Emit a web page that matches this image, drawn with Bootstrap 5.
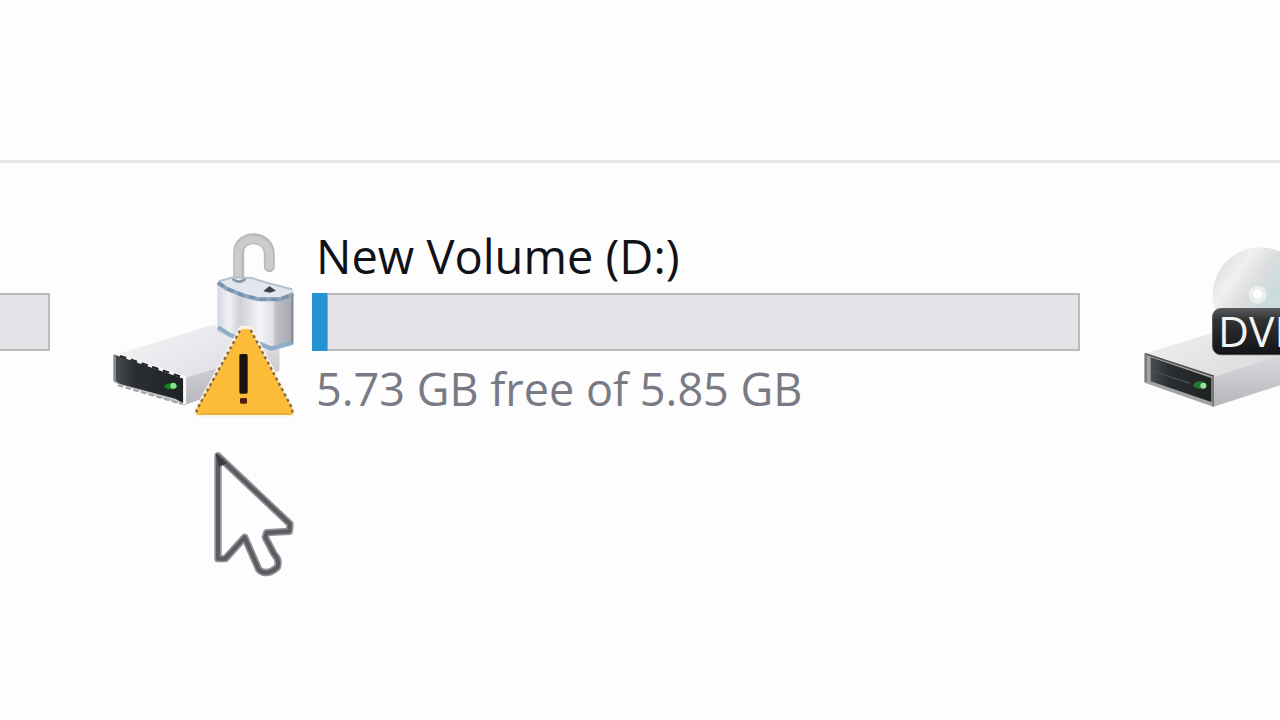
<!DOCTYPE html>
<html lang="en">
<head>
<meta charset="utf-8">
<meta name="viewport" content="width=device-width, initial-scale=1">
<title>Devices and drives</title>
<link href="https://cdn.jsdelivr.net/npm/bootstrap@5.3.0/dist/css/bootstrap.min.css" rel="stylesheet">
<style>
body { background: #fdfdfd; font-family: "Open Sans", "Noto Sans", sans-serif; }
.explorer { min-height: 100vh; }
.group-head { height: 163px; border-bottom: 3px solid #e6e6e6; }
.drives { padding-top: 67px; }
.drive-icon { width: 182px; height: 190px; }
.dvd-icon { width: 138px; height: 190px; }
.drive-info { margin: 0 62px 0 18px; min-width: 0; }
.drive-name, .drive-space { white-space: nowrap; padding-left: 4px; }
.drive-name { font-size: 47px; line-height: 52px; color: #111118; margin-bottom: 11px; }
.drive-space { font-size: 45px; line-height: 56px; color: #797a84; margin-top: 10px; }
.capacity { height: 58px; border: 2px solid #bbb; border-radius: 0; background: #e4e3e7; }
.capacity .progress-bar { background: #2593d1; margin: -2px 0 -2px -2px; border-right: 1px solid #9aa4b0; }
.prev-drive { width: 50px; margin-right: 62px; padding-top: 63px; }
.prev-drive .capacity { border-left: 0; }
.pointer { left: 200px; top: 440px; width: 110px; height: 150px; }
</style>
</head>
<body>
<main class="explorer position-relative overflow-hidden">
  <header class="group-head"></header>
  <section class="drives d-flex align-items-start">
    <div class="prev-drive flex-shrink-0">
      <div class="progress capacity" role="progressbar" aria-label="Previous drive capacity"></div>
    </div>

    <svg class="drive-icon flex-shrink-0" viewBox="36 30 546 570" aria-hidden="true">
      <defs>
        <linearGradient id="top" x1="0" y1="0" x2="1" y2="1"><stop offset="0" stop-color="#f6f6f8"/><stop offset=".6" stop-color="#e2e1e6"/><stop offset="1" stop-color="#cfced4"/></linearGradient>
        <linearGradient id="side" x1="0" y1="0" x2="0" y2="1"><stop offset="0" stop-color="#d9d9de"/><stop offset="1" stop-color="#b6b6bc"/></linearGradient>
        <linearGradient id="face" x1="0" y1="0" x2="1" y2="0"><stop offset="0" stop-color="#4b4e50"/><stop offset=".3" stop-color="#2b2e31"/><stop offset="1" stop-color="#1d2222"/></linearGradient>
        <linearGradient id="lockL" x1="0" y1="0" x2="1" y2="0"><stop offset="0" stop-color="#d4d8e0"/><stop offset=".5" stop-color="#f0f1f5"/><stop offset="1" stop-color="#c8cbd4"/></linearGradient>
        <linearGradient id="lockR" x1="0" y1="0" x2="1" y2="0"><stop offset="0" stop-color="#d2d4da"/><stop offset=".35" stop-color="#f5f5f8"/><stop offset=".6" stop-color="#e0e0e5"/><stop offset=".66" stop-color="#c0c1c8"/><stop offset="1" stop-color="#a3a5ad"/></linearGradient>
      </defs>
      <path d="M44 404 L340 314 L538 370 V450 L250 556 L248 488 Z" fill="url(#top)"/>
      <path d="M248 476 L538 388 V452 L252 556 Z" fill="url(#side)"/>
      <path d="M42 404 L60 400 L250 470 L252 556 L42 488 Z" fill="#c6c6ca"/>
      <path d="M44 404 L250 476 V550 L226 536 L60 492 L44 482 Z" fill="url(#face)"/>
      <path d="M44 404 V484" stroke="#8a8a8c" stroke-width="8"/>
      <path d="M48 400 L254 472 V552" fill="none" stroke="#f8f8fa" stroke-width="9"/>
      <path d="M54 496 L246 552" fill="none" stroke="#a2a3a7" stroke-width="6" stroke-dasharray="16 8"/>
      <path d="M60 408 L242 470" fill="none" stroke="#25292b" stroke-width="7" stroke-dasharray="20 14"/>
      <ellipse cx="213" cy="499" rx="20" ry="9" fill="#168421"/><circle cx="220" cy="497" r="9" fill="#8ee28e"/>

      <path d="M416 184 V98 C416 42 508 40 508 104 V140" fill="none" stroke="#bab9bc" stroke-width="33" stroke-linecap="round"/>
      <path d="M414 180 V98 C416 46 504 42 508 104 V138" fill="none" stroke="#cbcacd" stroke-width="22" stroke-linecap="round"/>
      <path d="M352 190 L425 224 V372 L352 336 Z" fill="url(#lockL)"/>
      <path d="M425 224 L480 236 L580 222 V372 L525 388 L425 360 Z" fill="url(#lockR)"/>
      <path d="M354 184 L400 170 L450 172 L580 208 V226 L500 238 L430 226 L356 196 Z" fill="#e3e7ed"/>
      <path d="M398 176 C410 190 432 186 436 174" fill="none" stroke="#8297ac" stroke-width="8"/>
      <path d="M354 188 L380 206 L430 226 L476 238 L540 238 L580 222" fill="none" stroke="#8ea5bc" stroke-width="12"/>
      <path d="M354 188 L380 206 L430 226 L476 238 L540 238 L580 222" fill="none" stroke="#7892ad" stroke-width="10" stroke-dasharray="20 14"/>
      <path d="M356 184 L400 172 L454 174 L500 188 L576 208" fill="none" stroke="#b3c2d0" stroke-width="6"/>
      <path d="M490 214 L508 198 L528 212 L510 218 Z" fill="#3c424b"/>
      <path d="M354 322 L390 345 L430 358 L482 372 L514 386 L578 368" fill="none" stroke="#91aec9" stroke-width="13"/>
      <path d="M577 226 V370" stroke="#858a93" stroke-width="6"/>

      <path d="M420 318 H454 L582 562 V590 H284 V566 Z" fill="#fcf2e2"/>
      <path d="M424 328 H450 L578 568 V585 H290 V568 Z" fill="#fdbc38"/>
      <path d="M420 332 L290 570 V583 M452 330 L577 566 V586" fill="none" stroke="#80684a" stroke-width="7" stroke-dasharray="9 9"/>
      <path d="M304 582 H570" stroke="#e7a747" stroke-width="5"/>
      <rect x="418" y="402" width="25" height="119" rx="5" fill="#1e120e"/>
      <rect x="420" y="534" width="21" height="17" rx="4" fill="#50200c"/>
    </svg>

    <div class="drive-info flex-grow-1">
      <div class="drive-name">New Volume (D:)</div>
      <div class="progress capacity overflow-visible" role="progressbar" aria-label="Used space on New Volume" aria-valuenow="2" aria-valuemin="0" aria-valuemax="100">
        <div class="progress-bar" style="width: 2.1%"></div>
      </div>
      <div class="drive-space">5.73 GB free of 5.85 GB</div>
    </div>

    <svg class="dvd-icon flex-shrink-0" viewBox="36 0 414 570" role="img" aria-label="DVD drive">
      <defs>
        <linearGradient id="disc" x1="0" y1="0" x2="1" y2=".7"><stop offset="0" stop-color="#d5d5d8"/><stop offset=".3" stop-color="#f0eff2"/><stop offset=".48" stop-color="#dcdddf"/><stop offset=".68" stop-color="#c8dcda"/><stop offset="1" stop-color="#dcdce0"/></linearGradient>
        <linearGradient id="badgeFill" x1="0" y1="0" x2="0" y2="1"><stop offset="0" stop-color="#58595b"/><stop offset=".25" stop-color="#303133"/><stop offset="1" stop-color="#121315"/></linearGradient>
        <linearGradient id="dvdTop" x1="0" y1="0" x2="1" y2="1"><stop offset="0" stop-color="#f0f0f2"/><stop offset="1" stop-color="#d2d2d5"/></linearGradient>
      </defs>
      <path d="M46 370 L250 308 L470 370 L470 460 L250 530 Z" fill="url(#dvdTop)"/>
      <path d="M250 442 L470 370 V458 L250 530 Z" fill="url(#side)"/>
      <path d="M44 370 L252 440 V531 L44 458 Z" fill="#a3a3a5"/>
      <path d="M62 382 L244 444 V516 L62 454 Z" fill="url(#face)"/>
      <path d="M46 371 L252 439" stroke="#4d4d4f" stroke-width="5"/>
      <path d="M47 370 V456" stroke="#77787a" stroke-width="7"/>
      <path d="M249 442 V528" stroke="#77787a" stroke-width="6"/>
      <path d="M70 424 L180 460" stroke="#4b4c50" stroke-width="4"/>
      <ellipse cx="210" cy="465" rx="20" ry="11" fill="#25782e"/><circle cx="220" cy="467" r="9" fill="#9ce19c"/>
      <circle cx="390" cy="194" r="142" fill="url(#disc)"/>
      <circle cx="383" cy="194" r="27" fill="#ebedee"/><circle cx="383" cy="192" r="14" fill="#fff"/>
      <rect x="248" y="236" width="300" height="138" rx="24" fill="url(#badgeFill)" stroke="#48494b" stroke-width="3"/>
      <text x="264" y="352" font-family="Open Sans, Noto Sans, sans-serif" font-size="128" fill="#f3f3f3">DVD</text>
    </svg>
  </section>

  <svg class="pointer position-absolute" viewBox="0 0 330 450" aria-hidden="true">
    <path d="M54 48 V356 L76 356 L134 292 L176 388 Q198 410 232 382 Q240 360 222 342 L196 292 L200 278 L268 274 L270 252 Z" fill="#fefefe" stroke="#909096" stroke-width="22" stroke-linejoin="round"/>
    <path d="M54 48 V356 L76 356 L134 292 L176 388 Q198 410 232 382 Q240 360 222 342 L196 292 L200 278 L268 274 L270 252 Z" fill="none" stroke="#5b5b61" stroke-width="12" stroke-linejoin="round"/>
    <path d="M46 38 L80 70 L58 80 Z" fill="#3a3a40"/>
  </svg>
</main>
<script src="https://cdn.jsdelivr.net/npm/bootstrap@5.3.0/dist/js/bootstrap.bundle.min.js"></script>
</body>
</html>
